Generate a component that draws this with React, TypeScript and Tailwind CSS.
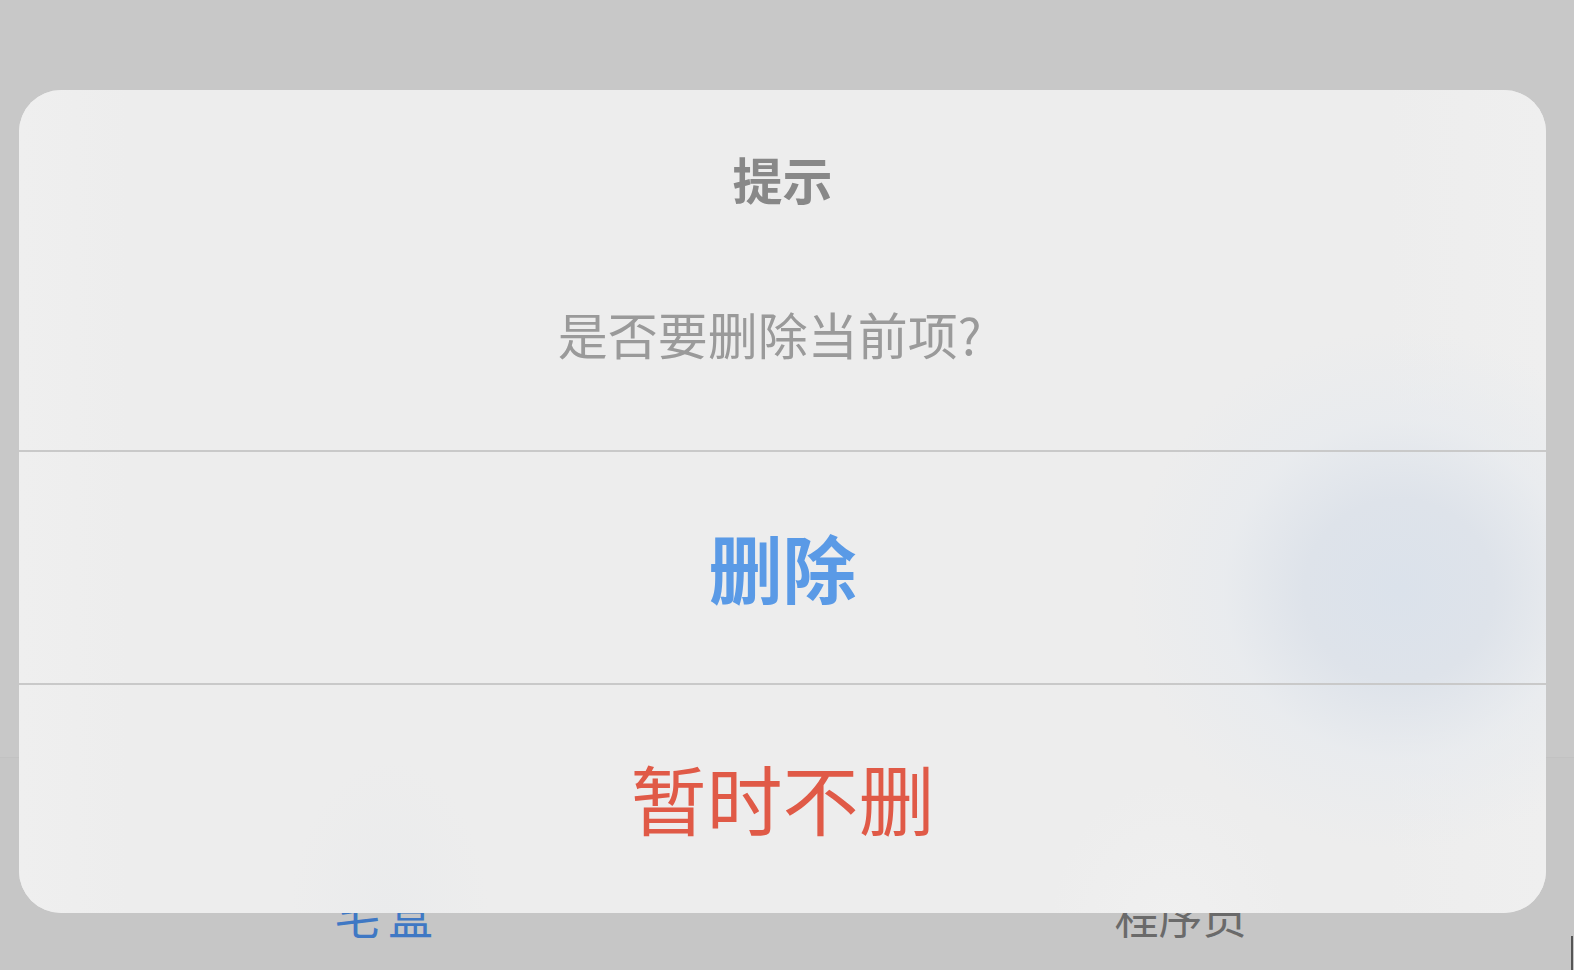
import React from "react";

const cjk = { fontFamily: '"Noto Sans CJK SC", "Noto Sans", sans-serif' };

function TabBar() {
  return (
    <div className="relative grid h-[213px] grid-cols-2 border-t border-[#c2c2c2] bg-[#c6c6c6]">
      <div className="flex justify-center pt-[133px]">
        <span className="mr-[12px] text-[46px] leading-[46px] tracking-[7px] text-[#3f78c4]">宅盒</span>
      </div>
      <div className="flex justify-center pt-[134px]">
        <span className="text-[44px] leading-[46px] text-[#6a6a6a]">程序员</span>
      </div>
      {/* device edge at the lower right */}
      <div className="absolute bottom-0 right-[1px] h-[34px] w-[2px] bg-[#555]" />
    </div>
  );
}

function ConfirmDialog() {
  return (
    <div className="absolute left-[19px] top-[90px] w-[1527px] overflow-hidden rounded-[42px] bg-[#ededed]">
      {/* frosted glass tint */}
      <div className="pointer-events-none absolute inset-y-0 left-0 w-[110px] bg-[linear-gradient(90deg,#efefef,rgba(237,237,237,0))]" />
      <div className="pointer-events-none absolute inset-y-0 right-0 w-[160px] bg-[linear-gradient(270deg,#efefef,rgba(237,237,237,0))]" />
      <div className="pointer-events-none absolute left-[1110px] top-[240px] h-[520px] w-[540px] bg-[radial-gradient(closest-side,#dbe2eb_0%,#dee3ea_35%,rgba(230,234,239,0.6)_65%,rgba(237,237,237,0)_100%)]" />
      <div className="pointer-events-none absolute left-[270px] top-[670px] h-[320px] w-[200px] bg-[radial-gradient(closest-side,#eaebec_0%,rgba(237,237,237,0)_100%)]" />
      <div className="pointer-events-none absolute left-[1030px] top-[690px] h-[300px] w-[240px] bg-[radial-gradient(closest-side,#f0f0f0_0%,rgba(237,237,237,0)_100%)]" />

      <div className="relative flex h-[360px] flex-col items-center">
        <div className="mt-[58px] text-[50px] font-bold leading-[60px] text-[#888888]">提示</div>
        <div className="mr-[26px] mt-[95px] text-[50px] leading-[60px] text-[#9a9a9a]">是否要删除当前项?</div>
      </div>
      <div className="relative h-[2px] bg-[#c9c9c9]" />
      <button className="relative flex h-[231px] w-full items-center justify-center text-[74px] font-bold leading-none text-[#5a9ae6]">
        <span className="-mt-[4px]">删除</span>
      </button>
      <div className="relative h-[2px] bg-[#c9c9c9]" />
      <button className="relative flex h-[228px] w-full items-center justify-center text-[76px] leading-none text-[#e05a47]">
        <span className="-mt-[4px]">暂时不删</span>
      </button>
    </div>
  );
}

export default function App() {
  return (
    <div className="relative flex h-[970px] w-full flex-col overflow-hidden bg-[#c8c8c8]" style={cjk}>
      <div className="flex-1" />
      <TabBar />
      <ConfirmDialog />
    </div>
  );
}
